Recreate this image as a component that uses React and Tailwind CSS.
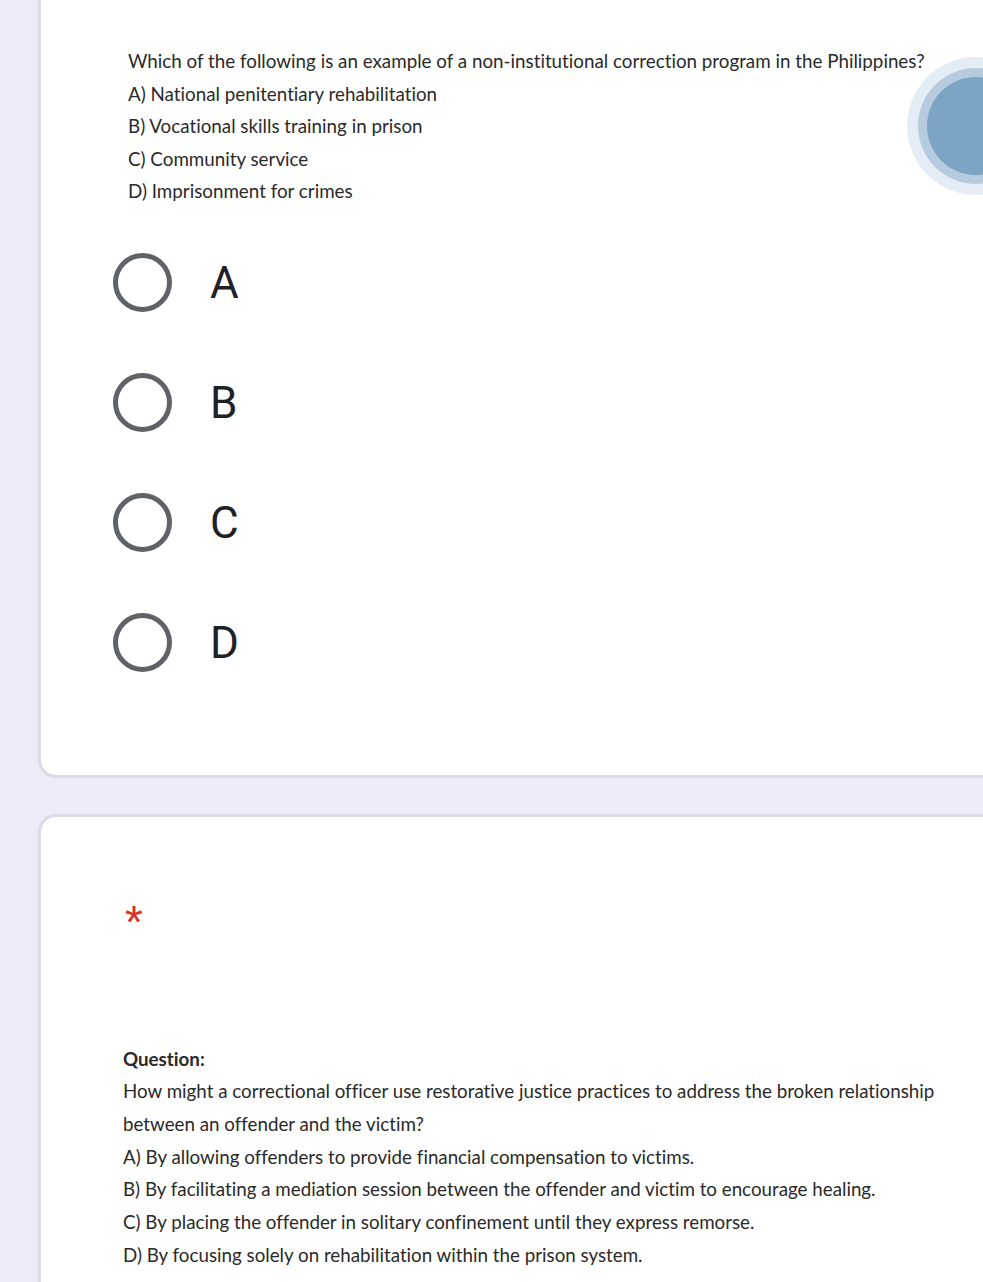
import React from "react";

const q1 = [
  "Which of the following is an example of a non-institutional correction program in the Philippines?",
  "A) National penitentiary rehabilitation",
  "B) Vocational skills training in prison",
  "C) Community service",
  "D) Imprisonment for crimes",
];

const q2 = [
  "How might a correctional officer use restorative justice practices to address the broken relationship",
  "between an offender and the victim?",
  "A) By allowing offenders to provide financial compensation to victims.",
  "B) By facilitating a mediation session between the offender and victim to encourage healing.",
  "C) By placing the offender in solitary confinement until they express remorse.",
  "D) By focusing solely on rehabilitation within the prison system.",
];

const textFont = { fontFamily: "Lato, 'Open Sans', sans-serif" };

export default function App() {
  return (
    <div className="relative w-[983px] h-[1282px] overflow-hidden bg-[#eeeaf8]">
      <div className="ml-[38px] bg-white border-l-[3px] border-b-[3px] border-[#dcdbe3] rounded-bl-[18px] pt-[45px] pb-[72px]">
        <div className="pl-[87px] text-[18.8px] leading-[32.5px] text-[#2a2a2a] [font-variant-ligatures:none]" style={textFont}>
          {q1.map((l) => (
            <div key={l} className="whitespace-nowrap">{l}</div>
          ))}
        </div>
        <div className="mt-[15px] pl-[72px]">
          {["A", "B", "C", "D"].map((l) => (
            <div key={l} className="h-[120px] flex items-center">
              <div className="w-[59px] h-[59px] rounded-full border-[5px] border-[#5f6368]" />
              <span className="ml-[38px] text-[44px] text-[#202124]" style={{ fontFamily: "Roboto, sans-serif" }}>
                {l}
              </span>
            </div>
          ))}
        </div>
      </div>

      <div className="mt-[36px] ml-[38px] h-[600px] bg-white border-l-[3px] border-t-[3px] border-[#dcdbe3] rounded-tl-[18px] pt-[82px]">
        <div className="pl-[84px] h-[32px] text-[46px] leading-[46px] text-[#d93025]" style={{ fontFamily: "'Liberation Sans', sans-serif" }}>
          *
        </div>
        <div className="mt-[112px] pl-[82px] text-[18.75px] leading-[32.7px] text-[#2a2a2a] [font-variant-ligatures:none]" style={textFont}>
          <div className="font-bold">Question:</div>
          {q2.map((l) => (
            <div key={l} className="whitespace-nowrap">{l}</div>
          ))}
        </div>
      </div>

      <div className="absolute left-[907px] top-[57px] w-[138px] h-[138px] rounded-full bg-[#e4edf6] flex items-center justify-center">
        <div className="w-[116px] h-[116px] rounded-full bg-[#b6cbdd] flex items-center justify-center">
          <div className="w-[98px] h-[98px] rounded-full bg-[#7ca4c5]" />
        </div>
      </div>
    </div>
  );
}
